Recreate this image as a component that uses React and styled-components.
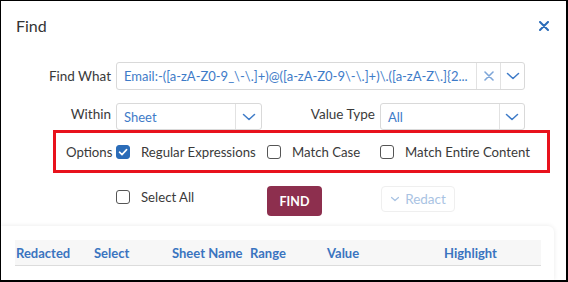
import React, { useState } from "react";
import styled, { createGlobalStyle } from "styled-components";

const GlobalStyle = createGlobalStyle`
  html, body {
    margin: 0;
    padding: 0;
    background: #fff;
  }
  * {
    box-sizing: border-box;
  }
`;

const Frame = styled.div`
  width: 568px;
  height: 282px;
  border-top: 1px solid #000;
  border-left: 1px solid #000;
  border-right: 2px solid #000;
  border-bottom: 2px solid #000;
  background: #fff;
  font-family: "Lato", "Noto Sans", sans-serif;
  color: #3a3a3a;
  overflow: hidden;
  display: flex;
  flex-direction: column;
`;

const Header = styled.div`
  height: 51px;
  display: flex;
  align-items: center;
  justify-content: space-between;
  padding: 0 16px 0 15px;
  .title {
    font-size: 16px;
    color: #333;
    margin-top: -3px;
  }
`;

const Close = styled.div`
  color: #2b6cb8;
  display: flex;
  align-items: center;
  margin-right: 1px;
  margin-top: -2px;
`;

const Row = styled.div`
  display: flex;
  align-items: center;
  margin-top: ${(p) => p.top || 0}px;
  height: ${(p) => p.h}px;
`;

const Label = styled.div`
  width: ${(p) => p.w}px;
  text-align: right;
  padding-right: 5px;
  font-size: 13.5px;
  color: #3a3a3a;
  align-self: ${(p) => (p.up ? "flex-start" : "center")};
  margin-top: ${(p) => (p.up ? 3 : 0)}px;
`;

const Combo = styled.div`
  width: ${(p) => p.w}px;
  height: 100%;
  border: 1px solid #d9d9d9;
  border-radius: 3px;
  display: flex;
  align-items: stretch;
  background: #fff;
`;

const ComboText = styled.div`
  flex: 1;
  min-width: 0;
  padding-left: 7px;
  padding-right: 4px;
  display: flex;
  align-items: center;
  font-size: 13px;
  color: #3e7bc8;
  white-space: nowrap;
  overflow: hidden;
`;

const ComboBtn = styled.div`
  width: ${(p) => p.w || 24}px;
  border-left: 1px solid #e2e2e2;
  display: flex;
  align-items: center;
  justify-content: center;
`;

const OptionsBox = styled.div`
  margin-left: 52px;
  width: 497px;
  height: 43px;
  border: 3px solid #e8121c;
  display: flex;
  align-items: center;
  padding-left: 10px;
  font-size: 13.2px;
  color: #3a3a3a;
  .caption {
    width: 50px;
  }
`;

const Check = styled.span`
  width: 14px;
  height: 14px;
  border-radius: 3px;
  border: 1.5px solid ${(p) => (p.on ? "#2b6cb8" : "#555")};
  background: ${(p) => (p.on ? "#2b6cb8" : "#fff")};
  display: inline-flex;
  align-items: center;
  justify-content: center;
  flex-shrink: 0;
`;

const CheckItem = styled.label`
  display: flex;
  align-items: center;
  gap: 11px;
  width: ${(p) => (p.w ? `${p.w}px` : "auto")};
  flex-shrink: 0;
  white-space: nowrap;
  cursor: pointer;
`;

const ActionRow = styled.div`
  display: flex;
  align-items: flex-start;
  height: 30px;
  margin-top: 13px;
  padding-left: 115px;
  font-size: 13.2px;
  & > ${CheckItem} {
    margin-top: 3px;
  }
`;

const FindButton = styled.button`
  width: 55px;
  height: 30px;
  border: none;
  border-radius: 4px;
  background: #8d2f4e;
  color: #fff;
  font-family: "Lato", "Noto Sans", sans-serif;
  font-weight: 700;
  font-size: 12.5px;
  padding: 0;
  padding-top: 1px;
`;

const RedactButton = styled.button`
  margin-left: 59px;
  width: 74px;
  height: 26px;
  border: 1px solid #efefef;
  border-radius: 4px;
  background: #fff;
  color: #a9c3e3;
  font-family: "Lato", "Noto Sans", sans-serif;
  font-size: 13.5px;
  display: flex;
  align-items: center;
  justify-content: center;
  gap: 5px;
  padding: 0;
`;

const Card = styled.div`
  margin-top: 10px;
  width: 553px;
  flex: 1;
  background: #fff;
  border-radius: 0 6px 0 0;
  box-shadow: 0 0 5px rgba(0, 0, 0, 0.09);
  padding: 14px 13px 0 14px;
`;

const TableHead = styled.div`
  display: grid;
  grid-template-columns: 78px 78px 78px 77px 117px 1fr;
  height: 26px;
  align-items: center;
  background: #f7f7f7;
  border-bottom: 1px solid #dcdcdc;
  padding-left: 1px;
  font-size: 13px;
  font-weight: 700;
  color: #3a74c0;
`;

const Chevron = ({ size = 16, color = "#3e7bc8", sw = 1.5 }) => (
  <svg width={size} height={size} viewBox="0 0 16 16" fill="none">
    <path d="M2.5 5.5 L8 10.5 L13.5 5.5" stroke={color} strokeWidth={sw} strokeLinecap="round" strokeLinejoin="round" />
  </svg>
);

const Cross = ({ size = 10, color = "#7ea6d8", sw = 1.6 }) => (
  <svg width={size} height={size} viewBox="0 0 10 10" fill="none">
    <path d="M1 1 L9 9 M9 1 L1 9" stroke={color} strokeWidth={sw} strokeLinecap="round" />
  </svg>
);

const Tick = () => (
  <svg width="10" height="10" viewBox="0 0 10 10" fill="none">
    <path d="M1.5 5.2 L4 7.6 L8.6 2.6" stroke="#fff" strokeWidth="1.6" strokeLinecap="round" strokeLinejoin="round" />
  </svg>
);

const columns = ["Redacted", "Select", "Sheet Name", "Range", "Value", "Highlight"];

const App = () => {
  const [opts, setOpts] = useState({ regex: true, mcase: false, entire: false, all: false });
  const toggle = (k) => setOpts({ ...opts, [k]: !opts[k] });

  return (
    <>
      <GlobalStyle />
      <Frame>
        <Header>
          <div className="title">Find</div>
          <Close>
            <Cross size={10} color="#2b6cb8" sw={2} />
          </Close>
        </Header>

        <Row top={10} h={28}>
          <Label w={115}>Find What</Label>
          <Combo w={409}>
            <ComboText>Email:-([a-zA-Z0-9_\-\.]+)@([a-zA-Z0-9\-\.]+)\.([a-zA-Z\.]&#123;2...</ComboText>
            <ComboBtn w={24}>
              <Cross />
            </ComboBtn>
            <ComboBtn w={24}>
              <Chevron />
            </ComboBtn>
          </Combo>
        </Row>

        <Row top={13} h={27}>
          <Label w={115} up>
            Within
          </Label>
          <Combo w={146}>
            <ComboText>Sheet</ComboText>
            <ComboBtn w={26}>
              <Chevron />
            </ComboBtn>
          </Combo>
          <Label w={118} up>
            Value Type
          </Label>
          <Combo w={145}>
            <ComboText>All</ComboText>
            <ComboBtn w={25}>
              <Chevron />
            </ComboBtn>
          </Combo>
        </Row>

        <OptionsBox>
          <span className="caption">Options</span>
          <CheckItem w={151} onClick={() => toggle("regex")}>
            <Check on={opts.regex}>{opts.regex && <Tick />}</Check>
            Regular Expressions
          </CheckItem>
          <CheckItem w={113} onClick={() => toggle("mcase")}>
            <Check on={opts.mcase}>{opts.mcase && <Tick />}</Check>
            Match Case
          </CheckItem>
          <CheckItem onClick={() => toggle("entire")}>
            <Check on={opts.entire}>{opts.entire && <Tick />}</Check>
            Match Entire Content
          </CheckItem>
        </OptionsBox>

        <ActionRow>
          <CheckItem w={151} onClick={() => toggle("all")}>
            <Check on={opts.all}>{opts.all && <Tick />}</Check>
            Select All
          </CheckItem>
          <FindButton>FIND</FindButton>
          <RedactButton>
            <Chevron size={10} color="#a9c3e3" sw={2} />
            Redact
          </RedactButton>
        </ActionRow>

        <Card>
          <TableHead>
            {columns.map((c) => (
              <div key={c}>{c}</div>
            ))}
          </TableHead>
        </Card>
      </Frame>
    </>
  );
};

export default App;
